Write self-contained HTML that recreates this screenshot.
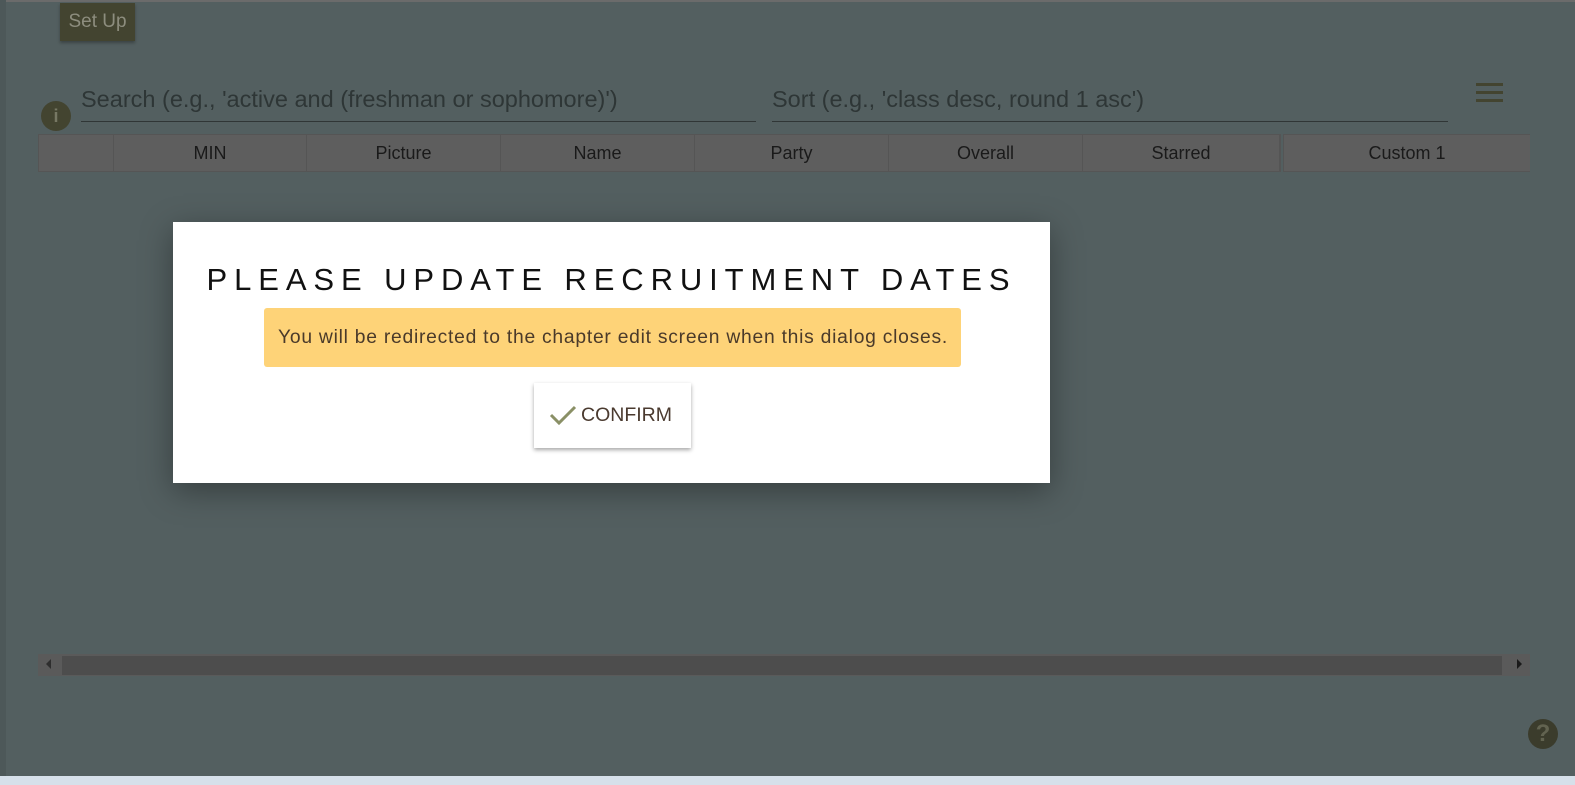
<!DOCTYPE html>
<html><head><style>
*{box-sizing:border-box;margin:0;padding:0}
body{width:1575px;height:785px;overflow:hidden;background:#535f60;font-family:"Liberation Sans",sans-serif;position:relative}
.a{position:absolute}
.th{position:absolute;top:134px;height:38px;border:1px solid #555;border-right:none;background:#5e5e5e;color:#1a1a1a;font-size:18px;text-align:center;line-height:36px}
</style></head><body>
<div class="a" style="left:0;top:0;width:1575px;height:2px;background:#6b6b6b"></div>
<div class="a" style="left:0;top:0;width:6px;height:778px;background:#4d5859"></div>
<div class="a" style="left:0;top:776px;width:1575px;height:9px;background:#d6e0ea"></div>
<div class="a" style="left:60px;top:3px;width:75px;height:38px;background:#434430;box-shadow:0 2px 3px rgba(0,0,0,.3);color:#8d8d7e;font-size:19px;line-height:38px;text-align:center">Set Up</div>
<div class="a" style="left:41px;top:101px;width:30px;height:30px;border-radius:50%;background:#434430;color:#777864;font-weight:bold;font-size:18px;text-align:center;line-height:30px">i</div>
<div class="a" style="left:81px;top:86px;width:675px;height:36px;border-bottom:1px solid #303636;color:#2e3636;font-size:23.5px">Search (e.g., 'active and (freshman or sophomore)')</div>
<div class="a" style="left:772px;top:86px;width:676px;height:36px;border-bottom:1px solid #303636;color:#2e3636;font-size:23.5px">Sort (e.g., 'class desc, round 1 asc')</div>
<div class="a" style="left:1476px;top:83px;width:27px;height:3px;background:#434430"></div>
<div class="a" style="left:1476px;top:91px;width:27px;height:3px;background:#434430"></div>
<div class="a" style="left:1476px;top:99px;width:27px;height:3px;background:#434430"></div>
<div class="th" style="left:38px;width:75px"></div>
<div class="th" style="left:113px;width:193px">MIN</div>
<div class="th" style="left:306px;width:194px">Picture</div>
<div class="th" style="left:500px;width:194px">Name</div>
<div class="th" style="left:694px;width:194px">Party</div>
<div class="th" style="left:888px;width:194px">Overall</div>
<div class="th" style="left:1082px;width:199px;border-right:2px solid #555">Starred</div>
<div class="th" style="left:1283px;width:247px">Custom 1</div>
<div class="a" style="left:38px;top:654px;width:1492px;height:22px;background:#5a5a5a"></div>
<div class="a" style="left:62px;top:656px;width:1440px;height:19px;background:#4d4d4d"></div>
<div class="a" style="left:46px;top:659px;width:0;height:0;border-top:5px solid transparent;border-bottom:5px solid transparent;border-right:5px solid #2e2e2e"></div>
<div class="a" style="left:1517px;top:659px;width:0;height:0;border-top:5px solid transparent;border-bottom:5px solid transparent;border-left:5px solid #1a1a1a"></div>
<div class="a" style="left:1528px;top:719px;width:30px;height:30px;border-radius:50%;background:#3b3c2c;color:#626350;font-weight:bold;font-size:24px;text-align:center;line-height:30px">?</div>
<div class="a" style="left:173px;top:222px;width:877px;height:261px;background:#fff;box-shadow:0 8px 30px rgba(0,0,0,.35)">
 <div class="a" style="left:0;top:40px;width:877px;text-align:center;font-size:31px;letter-spacing:6.9px;color:#111;white-space:nowrap">PLEASE UPDATE RECRUITMENT DATES</div>
 <div class="a" style="left:91px;top:86px;width:697px;height:59px;background:#fed378;border-radius:3px;color:#4a3a2a;line-height:59px;padding-left:14px;font-size:19.3px;letter-spacing:.75px;white-space:nowrap">You will be redirected to the chapter edit screen when this dialog closes.</div>
 <div class="a" style="left:361px;top:161px;width:157px;height:65px;background:#fff;box-shadow:0 2px 4px rgba(0,0,0,.35);color:#4a3a2f;font-size:19.5px;line-height:64px">
  <svg class="a" style="left:14px;top:20px" width="30" height="24" viewBox="0 0 30 24"><path d="M3 12 L11 20 L27 4" fill="none" stroke="#8a9066" stroke-width="3"/></svg>
  <span class="a" style="left:47px;top:0">CONFIRM</span>
 </div>
</div>
</body></html>
